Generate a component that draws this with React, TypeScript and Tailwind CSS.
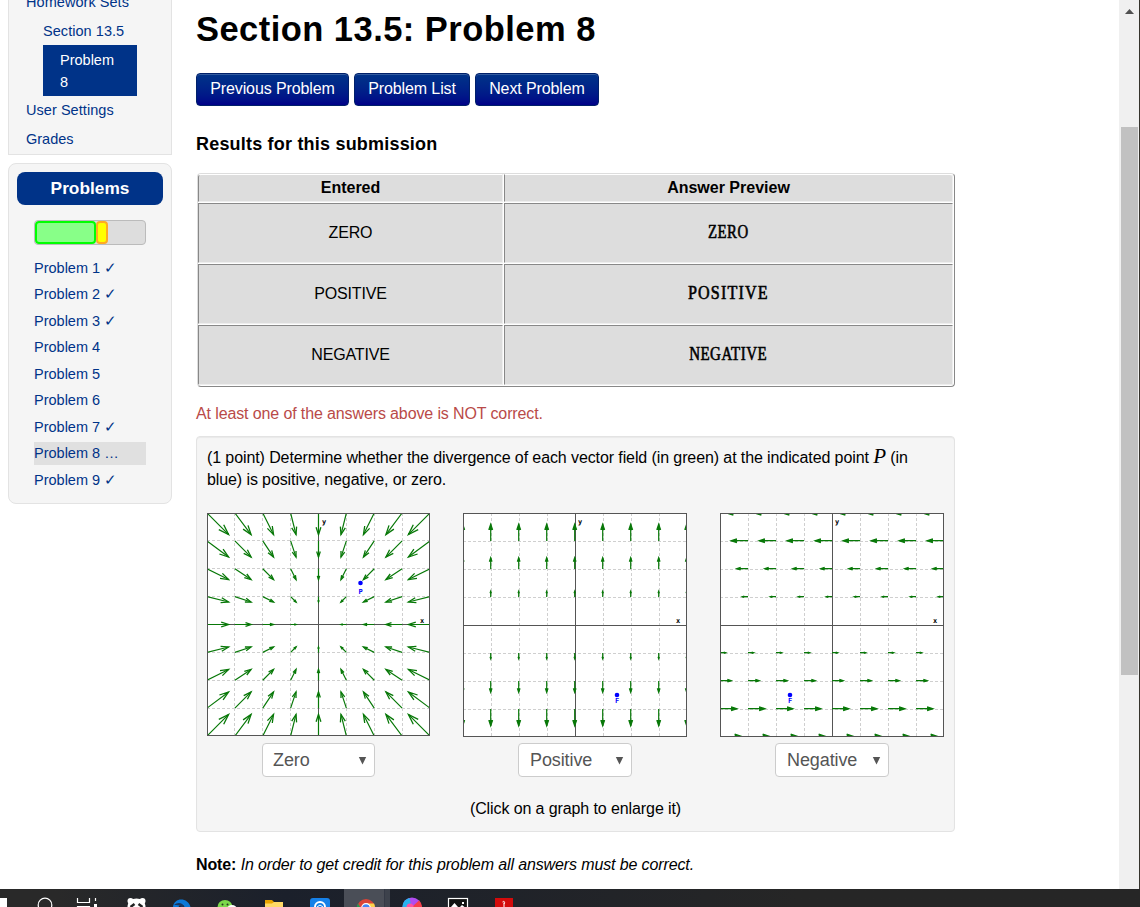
import React from 'react';

type Vec = [number, number];
type Graph = {
  id: string;
  answer: string;
  size: number;
  field: (x: number, y: number) => Vec;
  point: Vec;
  label: string;
  labelY: number;
  offset: Vec;
  headFill: string;
  selectWidth: string;
};
type Problem = {
  id: number;
  mark?: string;
};

const problems: Problem[] = [
  { id: 1, mark: '✓' },
  { id: 2, mark: '✓' },
  { id: 3, mark: '✓' },
  { id: 4 },
  { id: 5 },
  { id: 6 },
  { id: 7, mark: '✓' },
  { id: 8, mark: '…' },
  { id: 9, mark: '✓' },
];

const answers = [
  { entered: 'ZERO', fit: 'tracking-[0.6px] scale-x-[0.8]' },
  { entered: 'POSITIVE', fit: 'tracking-[1.3px] scale-x-[0.87]' },
  { entered: 'NEGATIVE', fit: 'tracking-[0.6px] scale-x-[0.81]' },
];

const graphs: Graph[] = [
  { id: 'a', answer: 'Zero', size: 223, field: (x, y) => [-5.4 * x, -5.4 * y], point: [153.5, 70], label: 'P', labelY: 81, offset: [0, 0], headFill: 'none', selectWidth: 'w-[113px] pl-[10px]' },
  { id: 'b', answer: 'Positive', size: 224, field: (_x, y) => [0, 5.6 * y], point: [154, 182], label: 'F', labelY: 190, offset: [-0.3, 0], headFill: '#087808', selectWidth: 'w-[114px] pl-[11px]' },
  { id: 'c', answer: 'Negative', size: 224, field: (_x, y) => [-5.6 * y, 0], point: [70, 182], label: 'F', labelY: 190, offset: [0, -0.3], headFill: '#087808', selectWidth: 'w-[114px] pl-[11px]' },
];

const steps = [-4, -3, -2, -1, 0, 1, 2, 3, 4];

// two barbs, 36% of the shaft long
function head(x: number, y: number, dx: number, dy: number) {
  const len = Math.hypot(dx, dy);
  const dir = Math.atan2(dy, dx);
  const tx = x + dx;
  const ty = y + dy;
  const barb = (a: number) => `${(tx - 0.36 * len * Math.cos(dir + a)).toFixed(1)} ${(ty - 0.36 * len * Math.sin(dir + a)).toFixed(1)}`;
  return `M${barb(0.32)}L${tx} ${ty}L${barb(-0.32)}`;
}

function VectorGraph({ graph }: { graph: Graph }) {
  const { size, field, point, offset } = graph;
  const cell = size / 8;
  const mid = size / 2;
  const axis = Math.floor(mid) + 0.5;
  const shafts: string[] = [];
  const heads: string[] = [];
  steps.forEach(y => steps.forEach(x => {
    const [vx, vy] = field(x, y);
    if (!vx && !vy) return;
    const px = mid + x * cell + offset[0];
    const py = mid - y * cell + offset[1];
    shafts.push(`M${px} ${py}l${vx} ${-vy}`);
    heads.push(head(px, py, vx, -vy));
  }));
  return (
    <svg width={size} height={size} viewBox={`0 0 ${size} ${size}`} className="block bg-white">
      {steps.slice(1, -1).filter(s => s !== 0).map(s => (
        <g key={s} stroke="#cfcfcf" strokeWidth="1" strokeDasharray="3 2">
          <path d={`M${Math.floor(mid + s * cell) + 0.5} 0V${size}`} />
          <path d={`M0 ${Math.floor(mid + s * cell) + 0.5}H${size}`} />
        </g>
      ))}
      <path d={`M${axis} 0V${size}M0 ${axis}H${size}`} stroke="#555" strokeWidth="1" />
      <path d={shafts.join('')} fill="none" stroke="#087808" strokeWidth="1.2" />
      <path d={heads.join('')} fill={graph.headFill} stroke="#087808" strokeWidth="1.3" />
      <rect x=".5" y=".5" width={size - 1} height={size - 1} fill="none" stroke="#555" />
      <text x="117" y="11" textAnchor="middle" className="font-['DejaVu_Sans_Mono'] text-[7px] font-bold">y</text>
      <text x="215" y="109.5" textAnchor="middle" className="font-['DejaVu_Sans_Mono'] text-[7px] font-bold">x</text>
      <circle cx={point[0]} cy={point[1]} r="2.3" fill="#00f" />
      <text x={point[0]} y={graph.labelY} textAnchor="middle" fill="#00f" className="font-['DejaVu_Sans_Mono'] text-[7px] font-bold">{graph.label}</text>
    </svg>
  );
}

function AnswerSelect({ value, width }: { value: string; width: string }) {
  return (
    <div className={`flex h-[34px] items-center justify-between rounded border border-[#ccc] bg-white pr-[7px] text-[18px] text-[#555] ${width}`}>
      <span>{value}</span>
      <svg width="9" height="9" viewBox="0 0 9 9"><path d="M.8 1h7.400L4.500 8.500z" fill="#555" /></svg>
    </div>
  );
}

function Sidebar() {
  return (
    <aside className="ml-2 w-[164px] shrink-0 text-[14.5px] text-[#003388]">
      <div className="flow-root h-[155px] border border-t-0 border-[#e3e3e3] bg-[#f5f5f5] pl-[17px]">
        <div className="-mt-[9px] h-[22px] leading-[22px] tracking-[0.05px]">Homework Sets</div>
        <div className="mt-[7px] ml-[17px] h-[22px] leading-[22px] tracking-[0.05px]">Section 13.5</div>
        <div className="mt-[3px] ml-[17px] h-[51px] w-[94px] bg-[#003388] py-1 pl-[17px] leading-[22px] text-white">Problem<br />8</div>
        <div className="mt-[3px] h-[22px] leading-[22px] tracking-[0.05px]">User Settings</div>
        <div className="mt-[7px] h-[22px] leading-[22px]">Grades</div>
      </div>
      <div className="mt-2 h-[341px] rounded-lg border border-[#e3e3e3] bg-[#f5f5f5] px-2 pt-2">
        <h2 className="h-[33px] rounded-lg bg-[#003388] text-center text-[17.3px] leading-[33px] font-bold text-white">Problems</h2>
        <div className="mx-[17px] mt-[15px] flex h-[25px] overflow-hidden rounded border border-[#bbb] bg-[#ddd]">
          <div className="w-[61px] rounded border-2 border-[#00ff00] bg-[#88ff88]" />
          <div className="w-[12px] rounded border-2 border-[#ffaa22] bg-[#ffff00]" />
        </div>
        <ul className="mx-[17px] mt-[11.5px]">
          {problems.map(p => (
            <li key={p.id} className="h-[26.5px]">
              <div className={p.id === 8 ? 'h-[23px] bg-[#e0e0e0] leading-[23px]' : 'h-[23px] leading-[23px]'}>Problem {p.id} {p.mark}</div>
            </li>
          ))}
        </ul>
      </div>
    </aside>
  );
}

function NavButton({ label, width }: { label: string; width: string }) {
  return (
    <button className={`h-[33px] rounded border border-[#00206a] bg-linear-to-b from-[#003388] to-[#000088] pb-[2px] text-[16px] tracking-[-0.1px] text-white shadow-[inset_0_1px_0_rgba(255,255,255,0.2)] ${width}`}>
      {label}
    </button>
  );
}

function ResultsTable() {
  const cell = 'border border-t-[#888] border-l-[#888] border-r-[#eee] border-b-[#eee] bg-[#ddd] flex justify-center';
  return (
    <div className="mt-[18px] ml-px grid w-[758px] grid-cols-[305px_449px] gap-px overflow-hidden rounded border border-t-[#ddd] border-r-[#888] border-b-[#888] border-l-[#ddd] bg-white pr-px pb-px">
      <div className="flex h-7 justify-center rounded-tl-[3px] border border-t-white border-r-[#eee] border-b-[#eee] border-l-[#888] bg-[#ddd] leading-[26px] font-bold">Entered</div>
      <div className="flex h-7 justify-center rounded-tr-[3px] border border-t-white border-r-[#eee] border-b-[#eee] border-l-[#888] bg-[#ddd] leading-[26px] font-bold">Answer Preview</div>
      {answers.map(a => (
        <React.Fragment key={a.entered}>
          <div className={`${cell} h-[60px] leading-[58px] tracking-[-0.15px]`}>{a.entered}</div>
          <div className={`${cell} h-[60px] font-['Liberation_Serif'] text-[18.5px] leading-[56px] [-webkit-text-stroke:0.6px_#000]`}>
            <span className={`inline-block ${a.fit}`}>{a.entered}</span>
          </div>
        </React.Fragment>
      ))}
    </div>
  );
}

function Taskbar() {
  return (
    <footer className="flex h-[18px] overflow-hidden bg-linear-to-r from-[#292929] from-5% via-[#1b202b] via-25% to-[#262626] to-70%">
      <svg width="22" height="18"><path d="M0 9h7v9H0z" fill="#fff" /></svg>
      <svg width="46" height="18"><circle cx="23" cy="16" r="6.8" fill="none" stroke="#fff" strokeWidth="1.2" /></svg>
      <svg width="46" height="18"><path d="M9.5 9v4.5h12V9M9 17.5h13M21.5 17v1M9.5 17v1M27.5 9v3" fill="none" stroke="#fff" strokeWidth="1.2" /><path d="M26 15h3v3h-3z" fill="#fff" /></svg>
      <svg width="46" height="18">
        <circle cx="16.5" cy="12" r="3" fill="#fff" /><circle cx="28.5" cy="12" r="3" fill="#fff" />
        <ellipse cx="22.5" cy="17" rx="9" ry="7.5" fill="#fff" />
        <path d="M16.500 18l4-3M28.500 18l-4-3" stroke="#222" strokeWidth="2.5" />
      </svg>
      <svg width="46" height="18"><path d="M13 18c1-10 15-10 17.500 0h-6c-1-3-4-3-6 0z" fill="#0b78d8" /><path d="M14 16c3-3 9-3 10 2h-3c-1-2-4-2-7-2z" fill="#19365e" /></svg>
      <svg width="46" height="18">
        <ellipse cx="19" cy="18" rx="7.5" ry="7" fill="#7bd849" /><circle cx="16.500" cy="15.500" r="1" fill="#263320" /><circle cx="21.500" cy="15.500" r="1" fill="#263320" />
        <ellipse cx="26" cy="20" rx="5" ry="4" fill="#fff" />
      </svg>
      <svg width="46" height="18"><path d="M13 11h7l2 2v3h-9z" fill="#e9a400" /><path d="M13 14.500h7l2-1.500h9v5H13z" fill="#ffd966" /></svg>
      <svg width="46" height="18"><rect x="12" y="9" width="20" height="20" rx="3" fill="#1681e8" /><circle cx="22" cy="18" r="5" fill="none" stroke="#fff" strokeWidth="2" /><path d="M19 18l3-2 3 2" stroke="#fff" fill="none" /></svg>
      <div className="flex h-[18px] w-[46px] bg-[#343945]">
        <svg width="40" height="18" className="shrink-0 bg-[#4a4e57]">
          <circle cx="22" cy="19" r="9" fill="#db4437" /><path d="M14 14.500L18 21h-5c-.5-3 0-5 1-6.500z" fill="#249a53" /><path d="M22 14.500h8c1 2 1 3.500 1 4.500h-7z" fill="#fdd34b" />
          <circle cx="22" cy="19" r="4.300" fill="#4285f4" stroke="#fff" strokeWidth="1.200" />
        </svg>
        <div className="ml-px w-[5px] bg-[#3d424c]" />
      </div>
      <svg width="46" height="18">
        <circle cx="22" cy="18" r="9.500" fill="#b04cf0" /><path d="M12.500 18c0-5 3-8 7-9l2 9z" fill="#27b4ef" /><path d="M22 18l7-6.500c2 2 3 4.500 3 6.500z" fill="#f4404a" /><circle cx="20" cy="18" r="3.500" fill="#ff52a3" />
      </svg>
      <svg width="46" height="18"><rect x="12.500" y="9.500" width="19" height="14" fill="#111" stroke="#fff" strokeWidth="1.200" /><path d="M15 18l3.500-4 3.500 4z" fill="#fff" /><path d="M24 18l2-2 2.500 2zM26 13h2v2h-2z" fill="#fff" /></svg>
      <svg width="46" height="18"><path d="M13 9h18v9H13z" fill="#d30b0b" /><path d="M22 18v-4.500M20.500 13c1.500-1.500 3 0 1.500 2" stroke="#fff" strokeWidth="1" fill="none" /></svg>
    </footer>
  );
}

export default function App() {
  return (
    <div className="h-[907px] w-[1140px] overflow-hidden bg-white font-['Liberation_Sans',Arial,sans-serif] text-[16px] text-black">
      <div className="flex h-[889px] overflow-hidden">
        <Sidebar />
        <main className="ml-6 w-[759px] shrink-0">
          <h1 className="mt-[9px] h-10 text-[34.5px] leading-10 font-bold tracking-[0.46px] whitespace-nowrap">Section 13.5: Problem 8</h1>
          <div className="mt-6 flex gap-[5px]">
            <NavButton label="Previous Problem" width="w-[153px]" />
            <NavButton label="Problem List" width="w-[116px]" />
            <NavButton label="Next Problem" width="w-[124px]" />
          </div>
          <h3 className="mt-[27px] h-[22px] text-[18px] leading-[22px] font-bold tracking-[0.2px]">Results for this submission</h3>
          <ResultsTable />
          <p className="mt-[16px] h-[22px] leading-[22px] tracking-[-0.12px] text-[#b94a48]">At least one of the answers above is NOT correct.</p>
          <section className="mt-[11px] h-[396px] rounded border border-[#e3e3e3] bg-[#f5f5f5] px-[10px] pt-[10px] tracking-[-0.1px] shadow-[inset_0_1px_1px_rgba(0,0,0,0.05)]">
            <p className="h-11 leading-[22px] whitespace-nowrap">
              (1 point) Determine whether the divergence of each vector field (in green) at the indicated point{' '}
              <i className="font-['Liberation_Serif'] text-[21px] leading-[16px]">P</i> (in<br />
              blue) is positive, negative, or zero.
            </p>
            <div className="mt-[22px] flex gap-[33px]">
              {graphs.map(g => (
                <div key={g.id} className="flex h-[264px] flex-col items-center justify-between">
                  <VectorGraph graph={g} />
                  <AnswerSelect value={g.answer} width={g.selectWidth} />
                </div>
              ))}
            </div>
            <p className="mt-[21px] text-center leading-[22px]">(Click on a graph to enlarge it)</p>
          </section>
          <p className="mt-[22px] leading-[22px] tracking-[-0.12px]"><b>Note:</b> <i>In order to get credit for this problem all answers must be correct.</i></p>
        </main>
        <div className="ml-auto flex w-[21px] flex-col border-r border-[#35332c] bg-[#f0f0f0]">
          <svg width="20" height="127" className="shrink-0"><path d="M6 14l4.500-5 4.500 5z" fill="#505050" /></svg>
          <div className="ml-[2px] h-[548px] w-[17px] shrink-0 bg-[#c1c1c1]" />
        </div>
      </div>
      <Taskbar />
    </div>
  );
}
